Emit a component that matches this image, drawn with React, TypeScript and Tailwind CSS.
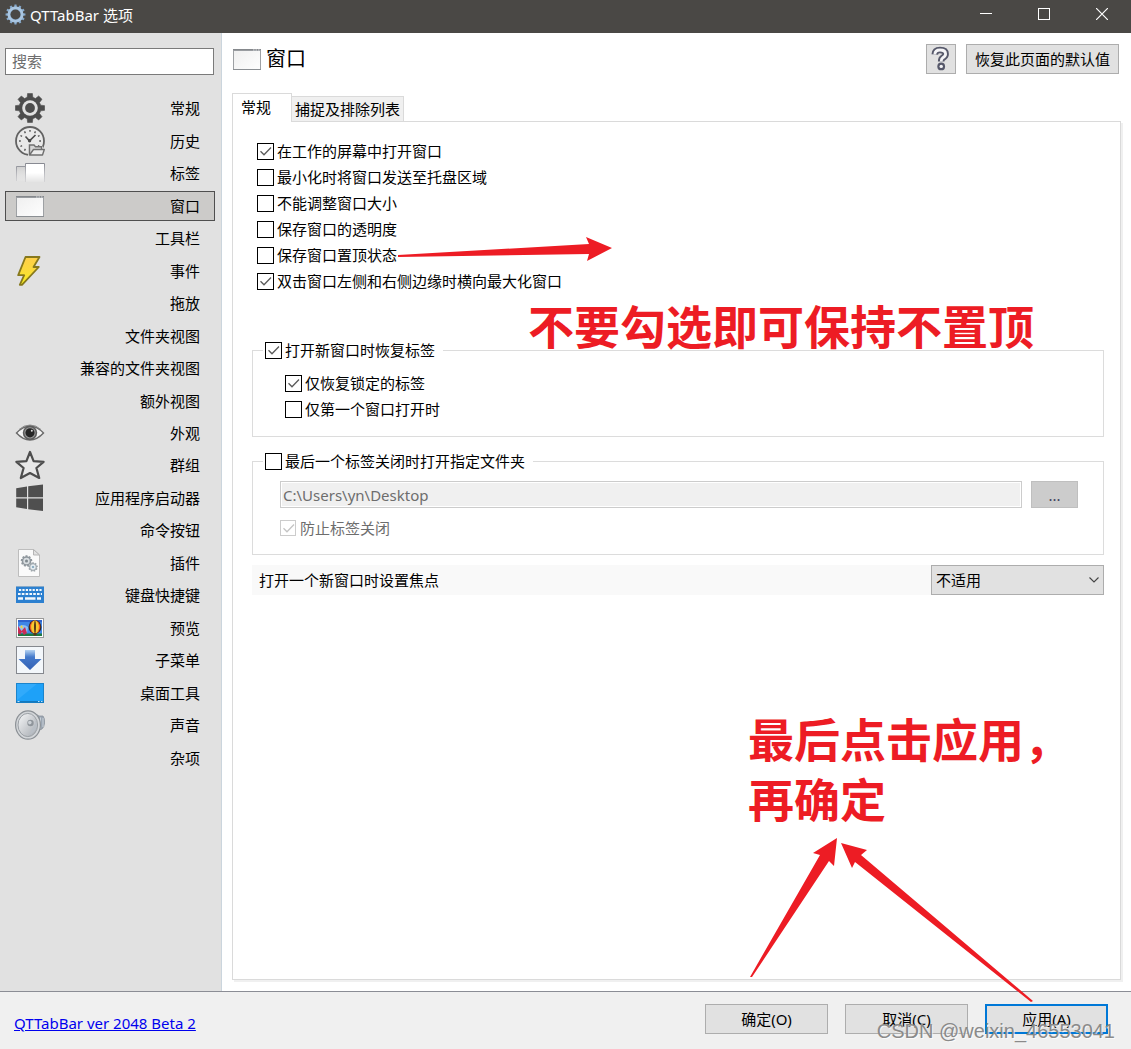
import React, { useId, useState } from "react";

function gearPath(cx: number, cy: number, teeth: number, outer: number, inner: number, halfTip: number, halfBase: number) {
  const point = (r: number, a: number) => `${(cx + r * Math.cos(a)).toFixed(2)} ${(cy + r * Math.sin(a)).toFixed(2)}`;
  const parts: string[] = [];
  for (let i = 0; i < teeth; i++) {
    const a = (i * 2 * Math.PI) / teeth - Math.PI / 2;
    parts.push(point(inner, a - halfBase), point(outer, a - halfTip), point(outer, a + halfTip), point(inner, a + halfBase));
  }
  return `M${parts.join("L")}Z`;
}

const iconProps = { width: 30, height: 30, viewBox: "0 0 30 30", "aria-hidden": true, className: "block shrink-0" };

function GearIcon() {
  return (
    <svg {...iconProps}>
      <path d={gearPath(15, 15, 8, 14.8, 11, 0.16, 0.26)} fill="#4c4c4c" stroke="#4c4c4c" strokeWidth="0.6" strokeLinejoin="round" />
      <circle cx="15" cy="15" r="7.8" fill="#e1e1e1" />
      <circle cx="15" cy="15" r="4.9" fill="#4c4c4c" />
    </svg>
  );
}

function ClockIcon() {
  return (
    <svg {...iconProps}>
      <circle cx="15" cy="15" r="14" fill="#e9e9e9" stroke="#626262" strokeWidth="1.8" />
      {Array.from({ length: 12 }, (_, i) => (
        <line key={i} x1="15" y1="4" x2="15" y2="5.8" stroke="#555" strokeWidth="1.4" transform={`rotate(${i * 30} 15 15)`} />
      ))}
      <path d="M10.5 10.5L14.5 14.8L20.5 9" fill="none" stroke="#4a4a4a" strokeWidth="1.6" />
      <circle cx="14.6" cy="14.8" r="1.7" fill="#4a4a4a" />
      <path d="M13 30V18.5H19L20.5 20.5H28V23H30V30Z" fill="#e1e1e1" />
      <path d="M14.5 29V19H19L20.5 20.8H26.5V23.5" fill="#d6d6d6" stroke="#707070" strokeWidth="1.4" />
      <path d="M14.5 29L18.5 23.5H29.3L27.5 29Z" fill="#ececec" stroke="#707070" strokeWidth="1.4" strokeLinejoin="round" />
    </svg>
  );
}

function TabsIcon() {
  const id = useId();
  return (
    <svg {...iconProps}>
      <defs>
        <linearGradient id={`${id}f`} x1="0" y1="0" x2="0" y2="1">
          <stop offset="0.5" stopColor="#fff" />
          <stop offset="1" stopColor="#fff" stopOpacity="0.1" />
        </linearGradient>
        <linearGradient id={`${id}b`} x1="0" y1="0" x2="0" y2="1">
          <stop offset="0" stopColor="#cfcfcf" />
          <stop offset="1" stopColor="#eee" stopOpacity="0.2" />
        </linearGradient>
        <linearGradient id={`${id}s`} gradientUnits="userSpaceOnUse" x1="0" y1="5" x2="0" y2="25">
          <stop offset="0" stopColor="#85878f" />
          <stop offset="1" stopColor="#a8a8b0" stopOpacity="0.2" />
        </linearGradient>
      </defs>
      <path d="M1.5 23V8.5H10V23Z" fill={`url(#${id}b)`} />
      <path d="M1.5 23V8.5H10" fill="none" stroke={`url(#${id}s)`} />
      <path d="M10.5 24V5.5H29.5V24Z" fill={`url(#${id}f)`} />
      <path d="M10.5 24V5.5H29.5V24" fill="none" stroke={`url(#${id}s)`} />
    </svg>
  );
}

function WindowIcon() {
  const id = useId();
  return (
    <svg {...iconProps}>
      <defs>
        <linearGradient id={id} x1="0" y1="0" x2="1" y2="1">
          <stop offset="0" stopColor="#efefef" />
          <stop offset="1" stopColor="#fefefe" />
        </linearGradient>
      </defs>
      <rect x="1.5" y="5.5" width="27" height="20" fill={`url(#${id})`} stroke="#9ea1a4" />
      <path d="M1 5.5H29" stroke="#85888c" />
      <path d="M1 6.5H29" stroke="#999ca0" />
      <path d="M21 6H22.5M23.5 6H25M26 6H27.5" stroke="#d8dadd" />
      <path d="M1 25.5H29" stroke="#8b8f93" />
    </svg>
  );
}

function BoltIcon() {
  const id = useId();
  return (
    <svg {...iconProps}>
      <defs>
        <linearGradient id={id} x1="0" y1="0" x2="0" y2="1">
          <stop offset="0" stopColor="#ffcf4a" />
          <stop offset="0.45" stopColor="#fbd93c" />
          <stop offset="1" stopColor="#f8f01a" />
        </linearGradient>
      </defs>
      <path d="M10.5 1H24.5L18.5 11H23.8L7 28.8H4.8L9.2 19.2H3.2L10.5 1Z" fill={`url(#${id})`} stroke="#86781d" strokeWidth="1.8" strokeLinejoin="round" />
    </svg>
  );
}

function EyeIcon() {
  return (
    <svg {...iconProps}>
      <path d="M1.5 15Q8 8 15 8T28.5 15Q22 22 15 22T1.5 15Z" fill="#f4f4f4" stroke="#6a6a6a" strokeWidth="1.4" />
      <path d="M4 11.5Q9 7 15 7T26 11.5" fill="none" stroke="#8c8c8c" strokeWidth="1" />
      <circle cx="15" cy="14.8" r="7.2" fill="#5d5d5d" />
      <circle cx="15" cy="14.8" r="5.6" fill="#9b9b9b" />
      <circle cx="15" cy="14.8" r="4.6" fill="#262626" />
      <circle cx="16.8" cy="12.8" r="1" fill="#ddd" />
    </svg>
  );
}

function StarIcon() {
  return (
    <svg {...iconProps}>
      <path d="M15 2L18.6 11.2L28.6 11.8L21.4 18L24.2 28L15 23L5.8 28L8.6 18L1.4 11.8L11.4 11.2Z" fill="#e8e8e8" stroke="#4d4d4d" strokeWidth="2.2" strokeLinejoin="round" />
    </svg>
  );
}

function WindowsIcon() {
  return (
    <svg {...iconProps}>
      <path d="M1.2 5.2L12 3.5V14.2H1.2ZM13.2 3.3L28 1.6V14.2H13.2ZM1.2 15.6H12V26L1.2 24.2ZM13.2 15.6H28V28L13.2 26.2Z" fill="#4f4f4f" />
    </svg>
  );
}

function PluginIcon() {
  return (
    <svg {...iconProps}>
      <path d="M3.5 1.5H18.5L24.5 7V28.5H3.5Z" fill="#fafafa" stroke="#bdbdbd" />
      <path d="M18.5 1.5V7H24.5Z" fill="#e2e2e2" stroke="#b5b5b5" />
      <path d={gearPath(11.5, 13, 9, 5.8, 4.6, 0.16, 0.25)} fill="#8f979d" />
      <circle cx="11.5" cy="13" r="3.2" fill="#d9dee1" />
      <circle cx="11.5" cy="13" r="1.5" fill="#7f888e" />
      <path d={gearPath(18, 19, 9, 4.9, 3.8, 0.16, 0.25)} fill="#a0a8ad" />
      <circle cx="18" cy="19" r="2.7" fill="#e3ecf1" />
      <circle cx="18" cy="19" r="1.1" fill="#7ba0b8" />
    </svg>
  );
}

function KeyboardIcon() {
  return (
    <svg {...iconProps}>
      <rect x="1" y="6" width="28" height="17" fill="#2c80d0" />
      <path d="M1 6.5H29" stroke="#86a9c8" />
      <path d="M4 10H27" stroke="#f4f8fc" strokeWidth="2.2" strokeDasharray="2.2 1.2" />
      <path d="M3 14H27" stroke="#f4f8fc" strokeWidth="2.2" strokeDasharray="2.6 1.2" />
      <path d="M3 18.5H8M10 18.5H20.5M22 18.5H26" stroke="#f4f8fc" strokeWidth="2.4" />
    </svg>
  );
}

function PictureIcon() {
  return (
    <svg {...iconProps}>
      <rect x="1.5" y="5.5" width="27" height="19" fill="#fff" stroke="#9a9a9a" />
      <rect x="3" y="7" width="24" height="16" fill="#3f86e6" />
      <path d="M3 7H27V9H3Z" fill="#2f62cc" />
      <path d="M3 14Q8 10 13 14L12 20H3Z" fill="#8cc0f5" />
      <path d="M3 20.5H27V23H3Z" fill="#1d7a42" />
      <path d="M3 13L6.5 18L10 14L12 20L9 22L7 19L5 22L3 20Z" fill="#c92c55" />
      <path d="M5 14L7 12L8 16Z" fill="#f5d33b" />
      <ellipse cx="20" cy="14" rx="6.4" ry="6.8" fill="#3a2418" />
      <ellipse cx="20" cy="14" rx="5.2" ry="6.4" fill="#ef5a24" />
      <ellipse cx="20" cy="14" rx="3.9" ry="6.4" fill="#f9c92f" />
      <ellipse cx="20" cy="14" rx="1" ry="6.4" fill="#5b3a15" />
      <path d="M18.5 20H21.5V22.5H18.5Z" fill="#5a3419" />
    </svg>
  );
}

function DownIcon() {
  const id = useId();
  return (
    <svg {...iconProps}>
      <defs>
        <linearGradient id={id} x1="0" y1="0" x2="0" y2="1">
          <stop offset="0" stopColor="#b5d3f2" />
          <stop offset="0.35" stopColor="#4379cb" />
          <stop offset="1" stopColor="#3360b4" />
        </linearGradient>
      </defs>
      <rect x="1.5" y="1.5" width="27" height="27" fill="#f3f7fb" stroke="#85888e" />
      <path d="M10 5H20V14H26.5L15 25L3.5 14H10Z" fill={`url(#${id})`} />
    </svg>
  );
}

function DesktopIcon() {
  return (
    <svg {...iconProps}>
      <rect x="1" y="5" width="28" height="20" fill="#1ea1f8" />
      <path d="M1 23V5H23Z" fill="#31aafb" />
      <rect x="1.5" y="5.5" width="27" height="19" fill="none" stroke="#1b84cc" />
      <path d="M1 23.8H29" stroke="#1579bd" strokeWidth="1.6" />
      <path d="M2.5 23.5H4.5M23 23.5H24.5M26 23.5H27.5" stroke="#b8e2fd" />
    </svg>
  );
}

function SpeakerIcon() {
  const id = useId();
  return (
    <svg {...iconProps}>
      <defs>
        <linearGradient id={id} x1="0" y1="0" x2="1" y2="1">
          <stop offset="0" stopColor="#f6f7f8" />
          <stop offset="1" stopColor="#a4a9af" />
        </linearGradient>
      </defs>
      <path d="M18 2.5L24 6H28Q29.8 8 29.6 13Q29.2 17 27 19L24.5 20L19 27Z" fill="#9ba6b2" stroke="#8b939c" strokeWidth="0.8" />
      <path d="M25.5 7.5V18.5M28 8V17" stroke="#c8d0d8" />
      <ellipse cx="13" cy="15" rx="12.4" ry="14.2" fill="#d3d6d9" stroke="#8b9095" strokeWidth="1.2" />
      <ellipse cx="12.8" cy="15" rx="9.8" ry="11.6" fill={`url(#${id})`} stroke="#9ba0a5" />
      <path d="M13 6Q20 7 20.5 13L14 25Q21 22 22 15Q21 7 13 6Z" fill="#b9bfc6" />
      <circle cx="15.5" cy="13" r="3.2" fill="#8f959b" />
      <circle cx="14.8" cy="12.6" r="1.8" fill="#ccd1d6" />
    </svg>
  );
}

function HelpIcon() {
  const hook = "M7.8 9.5Q8 5 13 5Q18.6 5 18.6 9Q18.6 11.2 15.8 12.8Q14.2 13.8 14.2 16.5";
  return (
    <svg width="28" height="28" viewBox="0 0 28 28" aria-hidden="true" fill="none" className="shrink-0">
      <path d={hook} stroke="#56586a" strokeWidth="6.6" strokeLinejoin="round" />
      <circle cx="14.2" cy="21.4" r="3.9" fill="#56586a" />
      <path d={hook} stroke="#f4f4f6" strokeWidth="2.8" />
      <circle cx="14.2" cy="21.4" r="1.7" fill="#f4f4f6" />
    </svg>
  );
}

const pages: { label: string; Icon?: () => React.JSX.Element }[] = [
  { label: "常规", Icon: GearIcon },
  { label: "历史", Icon: ClockIcon },
  { label: "标签", Icon: TabsIcon },
  { label: "窗口", Icon: WindowIcon },
  { label: "工具栏" },
  { label: "事件", Icon: BoltIcon },
  { label: "拖放" },
  { label: "文件夹视图" },
  { label: "兼容的文件夹视图" },
  { label: "额外视图" },
  { label: "外观", Icon: EyeIcon },
  { label: "群组", Icon: StarIcon },
  { label: "应用程序启动器", Icon: WindowsIcon },
  { label: "命令按钮" },
  { label: "插件", Icon: PluginIcon },
  { label: "键盘快捷键", Icon: KeyboardIcon },
  { label: "预览", Icon: PictureIcon },
  { label: "子菜单", Icon: DownIcon },
  { label: "桌面工具", Icon: DesktopIcon },
  { label: "声音", Icon: SpeakerIcon },
  { label: "杂项" },
];

function Check({ label, checked = false, disabled = false }: { label: string; checked?: boolean; disabled?: boolean }) {
  const [on, setOn] = useState(checked);
  return (
    <label className={disabled ? "flex h-[26px] w-fit items-center gap-[3px] text-[#6d6d6d]" : "flex h-[26px] w-fit items-center gap-[3px]"}>
      <span className="grid size-[17px] shrink-0">
        <input
          type="checkbox"
          checked={on}
          disabled={disabled}
          onChange={(e) => setOn(e.target.checked)}
          className="size-[17px] appearance-none border border-black bg-white [grid-area:1/1] disabled:size-4 disabled:border-[#cccccc]"
        />
        {on && (
          <svg width="17" height="17" viewBox="0 0 17 17" className="pointer-events-none z-10 [grid-area:1/1]" aria-hidden="true">
            <path d="M3.5 8.2L7 11.7L14 4.5" fill="none" stroke={disabled ? "#c4c4c4" : "#5a5a5a"} strokeWidth="1.3" />
          </svg>
        )}
      </span>
      {label}
    </label>
  );
}

const captionButton = "flex w-[58px] items-center justify-center";
const pushButton = "h-[30px] w-[123px] border border-[#adadad] bg-[#e1e1e1]";

export default function App() {
  const [page, setPage] = useState("窗口");
  return (
    <div className="relative flex min-h-screen flex-col bg-white font-['Noto_Sans','Noto_Sans_CJK_SC',sans-serif] text-[15px] leading-5 text-black">
      <header className="flex h-[33px] items-stretch bg-[#4a4845] text-white">
        <div className="flex flex-1 items-center gap-1 pb-1 pl-[5px]">
          <svg width="21" height="21" viewBox="0 0 21 21" aria-hidden="true">
            <path d={gearPath(10.5, 10.5, 12, 10, 7.8, 0.1, 0.17)} fill="#86a9cb" />
            <circle cx="10.5" cy="10.5" r="6.6" fill="none" stroke="#a9c6e2" strokeWidth="2.8" />
            <circle cx="10.5" cy="10.5" r="5" fill="#4a4845" />
          </svg>
          <h1>QTTabBar 选项</h1>
        </div>
        <div className="flex pb-[5px]">
          <button aria-label="最小化" className={captionButton}>
            <svg width="12" height="12" viewBox="0 0 12 12"><path d="M0 5.5H12" stroke="#fff" /></svg>
          </button>
          <button aria-label="最大化" className={captionButton}>
            <svg width="12" height="12" viewBox="0 0 12 12"><rect x="0.5" y="0.5" width="11" height="11" fill="none" stroke="#fff" /></svg>
          </button>
          <button aria-label="关闭" className={captionButton}>
            <svg width="12" height="12" viewBox="0 0 12 12"><path d="M0 0L12 12M12 0L0 12" stroke="#fff" strokeWidth="1.2" /></svg>
          </button>
        </div>
      </header>

      <div className="flex flex-1">
        <nav className="w-[222px] shrink-0 border-r border-[#cbd5dd] bg-[#e1e1e1] pt-[15px] pr-1.5 pl-[5px]">
          <input
            type="text"
            aria-label="搜索"
            placeholder="搜索"
            className="block h-[27px] w-[209px] border border-[#7a7a7a] bg-white px-1.5 pb-0.5 placeholder:text-[#6d6d6d]"
          />
          <ul className="mt-[17px] grid h-[682px] auto-rows-fr">
            {pages.map(({ label, Icon }) => (
              <li key={label} className="flex items-center">
                <button
                  aria-current={page === label ? "page" : undefined}
                  onClick={() => setPage(label)}
                  className="flex h-[30px] w-full items-center justify-between border border-transparent pr-3.5 pl-[9px] aria-[current=page]:border-[#4f4f4f] aria-[current=page]:bg-[#cccbc9]"
                >
                  {Icon ? <Icon /> : <span />}
                  <span>{label}</span>
                </button>
              </li>
            ))}
          </ul>
        </nav>

        <main className="flex min-w-0 flex-1 flex-col pt-[11px] pr-2.5 pb-[11px] pl-2.5">
          <div className="flex h-[30px] items-center gap-1">
            <WindowIcon />
            <h2 className="flex-1 text-xl">窗口</h2>
            <button aria-label="帮助" className="mr-1.5 flex size-[30px] items-center justify-center border border-[#adadad] bg-[#e1e1e1]">
              <HelpIcon />
            </button>
            <button className="mr-0.5 h-[30px] border border-[#adadad] bg-[#e1e1e1] px-2">恢复此页面的默认值</button>
          </div>

          <div role="tablist" className="mt-[19px] flex items-end">
            <button role="tab" aria-selected="true" className="z-10 -mb-px h-[29px] w-[60px] border border-b-0 border-[#dadada] bg-white pr-3 pb-0.5">
              常规
            </button>
            <button role="tab" aria-selected="false" className="-ml-px h-[25px] border border-b-0 border-[#dadada] bg-[#f0f0f0] px-[3px]">
              捕捉及排除列表
            </button>
          </div>

          <section className="flex-1 border border-[#dadada] pt-4 pr-4 pl-[19px] shadow-[2px_2px_0_#f0f0f0]">
            <div className="pl-[5px]">
              <Check label="在工作的屏幕中打开窗口" checked />
              <Check label="最小化时将窗口发送至托盘区域" />
              <Check label="不能调整窗口大小" />
              <Check label="保存窗口的透明度" />
              <Check label="保存窗口置顶状态" />
              <Check label="双击窗口左侧和右侧边缘时横向最大化窗口" checked />
            </div>

            <fieldset className="mt-[43px] border border-[#dcdcdc] pb-[14px] pl-8">
              <legend className="-ml-[22px] pr-2 pl-0.5">
                <Check label="打开新窗口时恢复标签" checked />
              </legend>
              <div className="pt-[7px]">
                <Check label="仅恢复锁定的标签" checked />
                <Check label="仅第一个窗口打开时" />
              </div>
            </fieldset>

            <fieldset className="mt-[11px] border border-[#dcdcdc] pr-[25px] pb-[13px] pl-[27px]">
              <legend className="-ml-[17px] pr-2 pl-0.5">
                <Check label="最后一个标签关闭时打开指定文件夹" />
              </legend>
              <div className="mt-[7px] flex items-center gap-[9px]">
                <input
                  type="text"
                  aria-label="指定文件夹"
                  disabled
                  defaultValue="C:\Users\yn\Desktop"
                  className="h-[27px] min-w-0 flex-1 border border-[#cccccc] bg-[#f0f0f0] px-0.5 text-[#6d6d6d] shadow-[inset_0_0_0_1px_#fff]"
                />
                <button disabled aria-label="浏览" className="h-[27px] w-[47px] border border-[#bfbfbf] bg-[#cccccc] text-[#40405a]">
                  ...
                </button>
              </div>
              <div className="mt-[7px]">
                <Check label="防止标签关闭" checked disabled />
              </div>
            </fieldset>

            <div className="mt-2.5 flex h-[30px] items-center bg-[#f9f9f9] pl-[7px]">
              <label htmlFor="focus" className="flex-1">打开一个新窗口时设置焦点</label>
              <div className="grid w-[173px] items-center">
                <select id="focus" className="h-[30px] w-full appearance-none border border-[#adadad] bg-[#e1e1e1] px-1 [grid-area:1/1]">
                  <option>不适用</option>
                </select>
                <svg width="10" height="6" viewBox="0 0 10 6" aria-hidden="true" className="pointer-events-none mr-[5px] justify-self-end [grid-area:1/1]">
                  <path d="M0.5 0.5L5 5L9.5 0.5" fill="none" stroke="#444" strokeWidth="1.1" />
                </svg>
              </div>
            </div>
          </section>
        </main>
      </div>

      <footer className="flex h-[58px] items-start justify-between border-t border-[#8b8d95] bg-[#f0f0f0] pt-3 pr-[23px] pl-3.5">
        <a href="#version" className="mt-[9px] text-[#0000ee] underline">QTTabBar ver 2048 Beta 2</a>
        <div className="flex gap-[17px]">
          <button className={pushButton}>确定(O)</button>
          <button className={pushButton}>取消(C)</button>
          <button className="h-[30px] w-[123px] border-2 border-[#0078d7] bg-[#e1e1e1]">应用(A)</button>
        </div>
      </footer>

      <div className="pointer-events-none absolute inset-0 z-20 overflow-hidden font-bold text-[#ed1c24]">
        <svg width="1131" height="1049" viewBox="0 0 1131 1049" fill="#ed1c24" aria-hidden="true" className="absolute top-0 left-0">
          <path d="M398 255L589 244L586 237L612 248L587 261L589 254L398 257Z" />
          <path d="M750 977L820 855L813 853L837 838L834 866L829 861L752 977Z" />
          <path d="M1031 1002L855 862L852 868L841 843L867 850L861 855L1033 1001Z" />
        </svg>
        <p className="absolute top-[296px] left-[528px] text-[46px] leading-[60px] whitespace-nowrap">不要勾选即可保持不置顶</p>
        <p className="absolute top-[709px] left-[748px] text-[46px] leading-[60px] whitespace-nowrap">
          最后点击应用，
          <br />
          再确定
        </p>
        <p className="absolute right-4 bottom-1.5 font-['Liberation_Sans',sans-serif] text-xl leading-6 font-normal text-[#8a8a8a] [text-shadow:1px_1px_0_#ffffffb0]">
          CSDN @weixin_46553041
        </p>
      </div>
    </div>
  );
}
